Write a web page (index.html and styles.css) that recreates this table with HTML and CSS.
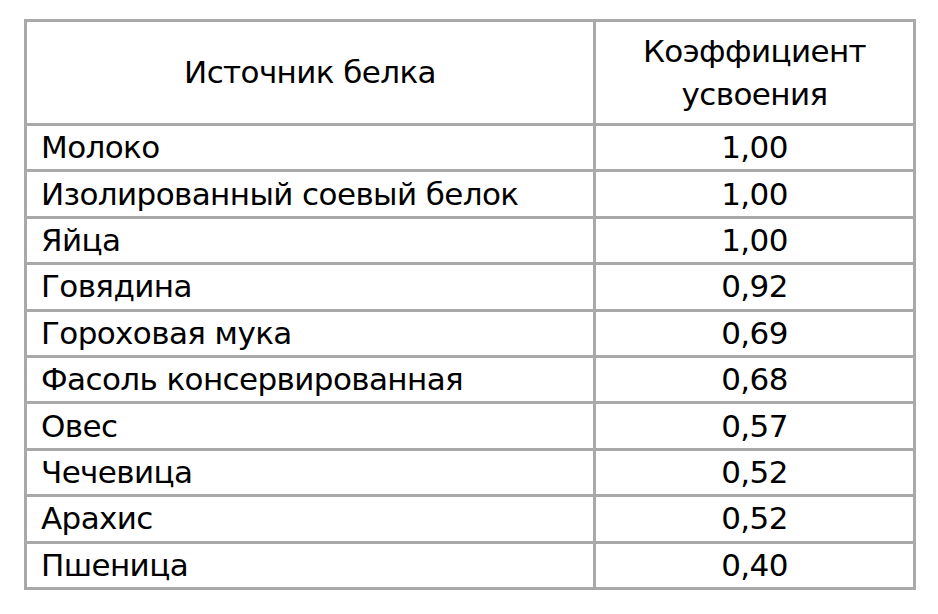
FILE: index.html
```html
<!DOCTYPE html>
<html>
<head>
<meta charset="utf-8">
<link rel="stylesheet" href="styles.css">
</head>
<body>
<table class="tbl">
  <thead>
    <tr><th class="c1">Источник белка</th><th class="c2">Коэффициент<br>усвоения</th></tr>
  </thead>
  <tbody>
    <tr><td class="name">Молоко</td><td class="val">1,00</td></tr>
    <tr><td class="name">Изолированный соевый белок</td><td class="val">1,00</td></tr>
    <tr><td class="name">Яйца</td><td class="val">1,00</td></tr>
    <tr><td class="name">Говядина</td><td class="val">0,92</td></tr>
    <tr><td class="name">Гороховая мука</td><td class="val">0,69</td></tr>
    <tr><td class="name">Фасоль консервированная</td><td class="val">0,68</td></tr>
    <tr><td class="name">Овес</td><td class="val">0,57</td></tr>
    <tr><td class="name">Чечевица</td><td class="val">0,52</td></tr>
    <tr><td class="name">Арахис</td><td class="val">0,52</td></tr>
    <tr><td class="name">Пшеница</td><td class="val">0,40</td></tr>
  </tbody>
</table>
</body>
</html>
```
FILE: styles.css
```css
html, body {
  margin: 0;
  padding: 0;
  background: #ffffff;
}
body {
  padding: 19px 0 0 24px;
  font-family: "DejaVu Sans", Verdana, sans-serif;
  color: #000;
}
.tbl {
  border-collapse: collapse;
  width: 892px;
  table-layout: fixed;
  font-size: 31px;
  letter-spacing: -0.6px;
}
.tbl th, .tbl td {
  border: 3px solid #a9a9a9;
  padding: 0;
}
.tbl th {
  font-weight: normal;
  height: 101px;
  line-height: 43px;
  text-align: center;
}
.c1 { width: 566px; }
.tbl td {
  height: 43.4px;
  line-height: 43px;
}
.name {
  text-align: left;
  padding-left: 14px !important;
}
.val {
  text-align: center;
}
```
